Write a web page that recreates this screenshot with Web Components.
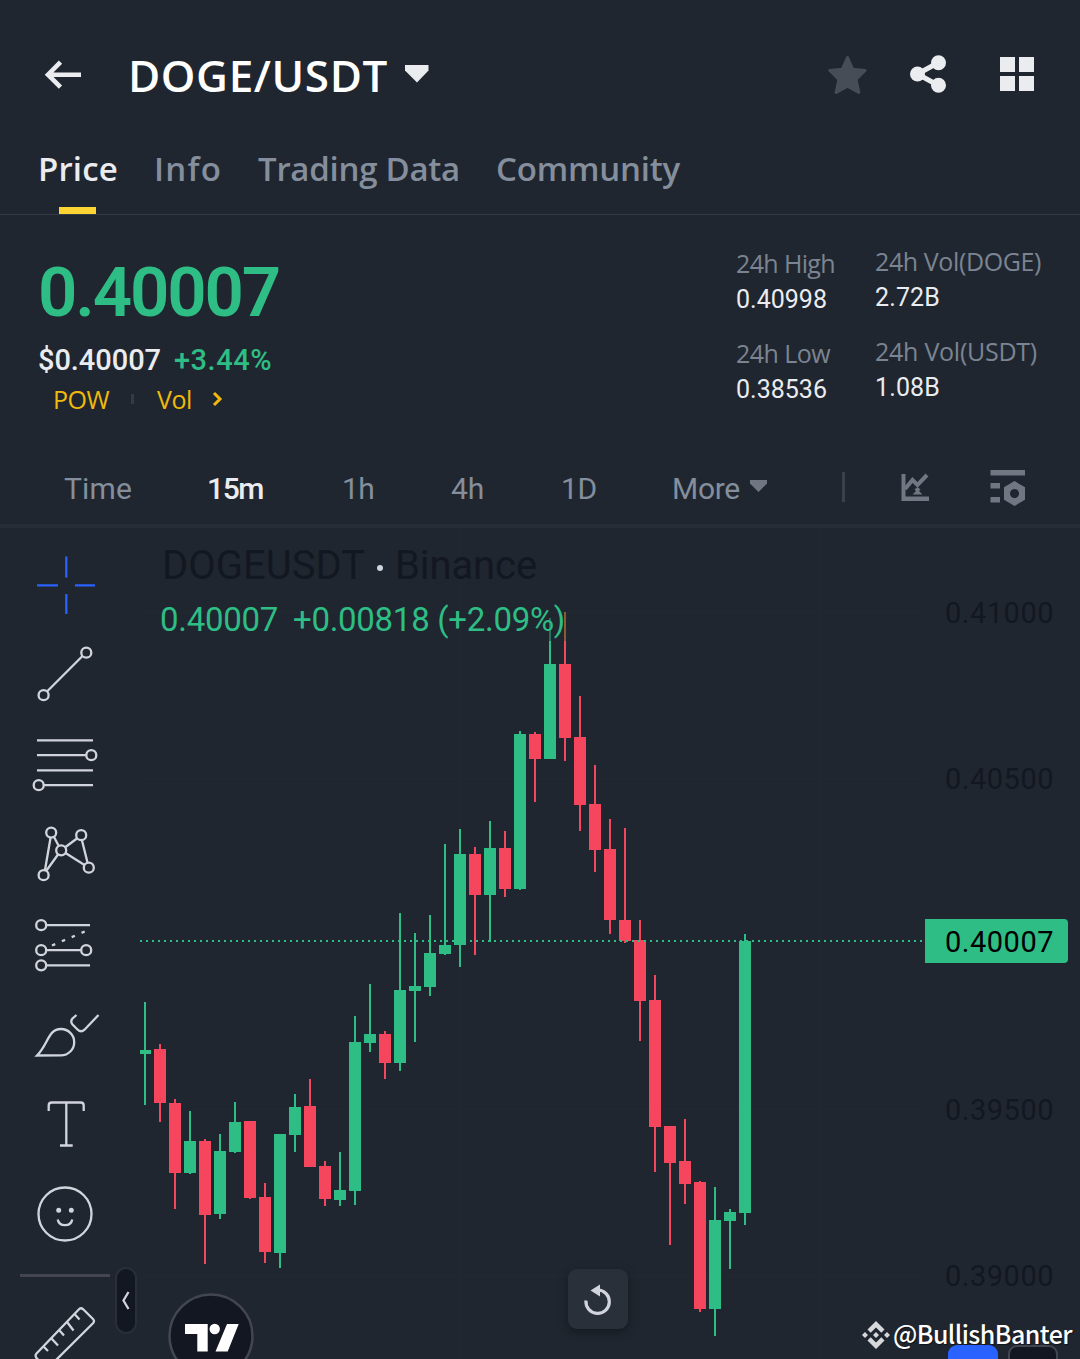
<!DOCTYPE html>
<html lang="en">
<head>
<meta charset="utf-8">
<title>DOGE/USDT</title>
<style>
  body {
    margin: 0;
    background: #20262f;
    color: #eaecef;
    font-family: Roboto, "Liberation Sans", sans-serif;
    overflow: hidden;
  }
</style>
</head>
<body>
<trade-page></trade-page>

<script>
const attach = (element, html) => {
  const template = document.createElement('template');
  template.innerHTML = html;
  element.attachShadow({ mode: 'open' });
  element.shadowRoot.appendChild(template.content.cloneNode(true));
};

// A single line of text, tracked so that it fills the width in its "w" attribute
class TrackedText extends HTMLElement {
  constructor() {
    super();
    attach(this, `
      <style>
        :host { display: block; flex: none; }
        span { display: inline-block; white-space: pre; vertical-align: top; }
      </style>
      <span><slot></slot></span>`);
  }

  connectedCallback() {
    const span = this.shadowRoot.querySelector('span');
    const nodes = this.shadowRoot.querySelector('slot').assignedNodes({ flatten: true });
    const count = nodes.map((node) => node.textContent).join('').length;
    const target = Number(this.getAttribute('w'));
    const natural = span.getBoundingClientRect().width;
    this.style.width = `${target}px`;
    span.style.letterSpacing = `${(target - natural) / count}px`;
  }
}

class PairHeader extends HTMLElement {
  constructor() {
    super();
    attach(this, `
      <style>
        :host {
          display: flex;
          align-items: center;
          height: 150px;
          box-sizing: border-box;
          padding: 0 44px 0 43px;
        }
        svg { display: block; flex: none; }
        tracked-text {
          font: 600 44px/60px "Open Sans", sans-serif;
          color: #fff;
          margin: 0 17px 0 46px;
        }
        .caret { margin-top: -2px; }
        .actions { display: flex; align-items: center; margin: -2px 2px 0 auto; }
        .share { margin: 0 53px 0 42px; }
      </style>
      <svg width="39" height="30" viewBox="43 60 39 30" fill="none" stroke="#eaecef" stroke-width="4.6">
        <path d="M81 74.700H48M60.500 62.200L48 74.700l12.500 12.500"/>
      </svg>
      <tracked-text w="260"><slot></slot></tracked-text>
      <svg class="caret" width="24" height="18" viewBox="0 0 24 18"><path d="M0 0h23.500v5.500L12 17.500 0 5.500z" fill="#eaecef"/></svg>
      <div class="actions">
        <svg width="39" height="40" viewBox="828 54 39 40" fill="#474d57" stroke="#474d57" stroke-width="3" stroke-linejoin="round">
          <path d="M847.500 57.500l5.200 11.800 12.300 1.100-9 9 2.800 13-11.300-6.300-11.300 6.300 2.700-13-9-9 12.400-1.100z"/>
        </svg>
        <svg class="share" width="38" height="40" viewBox="909 54 38 40" fill="#eaecef" stroke="#eaecef">
          <path d="M938.500 62.500L917.500 74l21 11.500" fill="none" stroke-width="5"/>
          <circle cx="917.500" cy="74" r="7.500" stroke="none"/>
          <circle cx="938.500" cy="62.800" r="7.500" stroke="none"/>
          <circle cx="938.500" cy="85.300" r="7.500" stroke="none"/>
        </svg>
        <svg width="34" height="36" viewBox="0 0 34 36" fill="#eaecef">
          <path d="M0 1h15v15H0zM19 1h15v15H19zM0 20h15v15H0zM19 20h15v15H19z"/>
        </svg>
      </div>`);
  }
}

class PageTabs extends HTMLElement {
  constructor() {
    super();
    attach(this, `
      <style>
        :host {
          display: flex;
          gap: 36px;
          height: 65px;
          box-sizing: border-box;
          padding-left: 38px;
          border-bottom: 1px solid #343a45;
          font: 600 33px/38px "Open Sans", sans-serif;
          color: #848e9c;
        }
        .tab { display: flex; flex-direction: column; align-items: center; justify-content: space-between; }
        .active { color: #eaecef; }
        .active::after { content: ""; width: 37px; height: 7px; background: #fcd535; margin-right: 1px; }
      </style>
      <div class="tab active"><tracked-text w="80">Price</tracked-text></div>
      <div class="tab"><tracked-text w="68">Info</tracked-text></div>
      <div class="tab"><tracked-text w="202">Trading Data</tracked-text></div>
      <div class="tab"><tracked-text w="184">Community</tracked-text></div>`);
  }
}

class StatCell extends HTMLElement {
  constructor() {
    super();
    attach(this, `
      <style>
        :host { display: block; height: 90px; }
        .label { font: 400 25px/34px "Open Sans", sans-serif; color: #7b8492; }
        .value { font: 400 25px/37px Roboto, sans-serif; color: #eaecef; margin-top: 1px; }
      </style>
      <div class="label"><slot name="label"></slot></div>
      <div class="value"><slot></slot></div>`);
  }
}

class PriceSummary extends HTMLElement {
  constructor() {
    super();
    attach(this, `
      <style>
        :host { display: flex; height: 240px; }
        .left { flex: 1; padding: 40px 0 0 38px; }
        .last { font: 600 69px/76px Roboto, sans-serif; color: #2ebd85; }
        .row { display: flex; align-items: center; }
        .fiat { height: 42px; margin-top: 8px; gap: 13px; font: 500 29px/42px Roboto, sans-serif; }
        .up { color: #2ebd85; }
        .tags { height: 36px; padding-left: 15px; font: 400 25px/34px "Open Sans", sans-serif; color: #f0b90b; }
        .bar { width: 3px; height: 10px; background: #333b47; margin: 0 23px 0 22px; }
        .tags svg { margin-left: 20px; }
        .stats { display: grid; grid-template-columns: 139px 205px; align-content: start; padding-top: 31px; }
        .second { margin-top: -2px; }
      </style>
      <div class="left">
        <tracked-text class="last" w="241">0.40007</tracked-text>
        <div class="row fiat">
          <tracked-text w="123">$0.40007</tracked-text>
          <tracked-text class="up" w="98">+3.44%</tracked-text>
        </div>
        <div class="row tags">
          <tracked-text w="56">POW</tracked-text>
          <span class="bar"></span>
          <tracked-text w="35">Vol</tracked-text>
          <svg width="12" height="16" viewBox="0 0 12 16" fill="none" stroke="#f0b90b" stroke-width="3"><path d="M2 2l6 6-6 6"/></svg>
        </div>
      </div>
      <div class="stats">
        <stat-cell><tracked-text slot="label" w="99">24h High</tracked-text><tracked-text w="91">0.40998</tracked-text></stat-cell>
        <stat-cell class="second"><tracked-text slot="label" w="166">24h Vol(DOGE)</tracked-text><tracked-text w="65">2.72B</tracked-text></stat-cell>
        <stat-cell><tracked-text slot="label" w="94">24h Low</tracked-text><tracked-text w="91">0.38536</tracked-text></stat-cell>
        <stat-cell class="second"><tracked-text slot="label" w="162">24h Vol(USDT)</tracked-text><tracked-text w="65">1.08B</tracked-text></stat-cell>
      </div>`);
  }
}

class IntervalBar extends HTMLElement {
  constructor() {
    super();
    attach(this, `
      <style>
        :host {
          display: flex;
          align-items: center;
          height: 73px;
          box-sizing: border-box;
          border-bottom: 4px solid #272d36;
          padding: 0 54px 2px 64px;
          font: 400 30px/40px Roboto, sans-serif;
          color: #848e9c;
        }
        .active { color: #eaecef; font-weight: 500; margin: 0 79px 0 75px; }
        .hour { margin-right: 77px; }
        .four { margin-right: 77px; }
        .day { margin-right: 75px; }
        svg { display: block; flex: none; fill: #707782; }
        .caret { margin: -5px 75px 0 10px; }
        .bar { width: 3px; height: 30px; background: #3a414c; margin: -4px 56px 0 0; }
        .chart { margin: -3px 61px 0 0; }
      </style>
      <tracked-text w="68">Time</tracked-text>
      <tracked-text class="active" w="56">15m</tracked-text>
      <tracked-text class="hour" w="32">1h</tracked-text>
      <tracked-text class="four" w="33">4h</tracked-text>
      <tracked-text class="day" w="36">1D</tracked-text>
      <tracked-text w="68">More</tracked-text>
      <svg class="caret" width="17" height="12" viewBox="0 0 17 12"><path d="M0 0h17v3.500L8.500 12 0 3.500z"/></svg>
      <span class="bar"></span>
      <svg class="chart" width="28" height="29" viewBox="901 472 28 29">
        <path d="M901.500 473h4v22.500h23.500v4.500h-27.500z"/>
        <path d="M905 488l7.500-9 5 5 9.500-10" fill="none" stroke="#707782" stroke-width="4"/>
        <path d="M917.500 486l3 2.500-1.500 1.500 3.500 3.500h-10l3.500-3.500-1.500-1.500z"/>
      </svg>
      <svg width="36" height="38" viewBox="990 470 36 38">
        <path d="M990.500 470h34.500v5.500h-34.500zM990.500 483h9.500v5.500h-9.500zM990.500 497h9.500v5.500h-9.500z"/>
        <path fill-rule="evenodd" d="M1014.500 481l10.500 6.200v12.600l-10.500 6.200-10.500-6.200v-12.600zM1014.500 489a4.500 4.500 0 1 0 .01 0z"/>
      </svg>`);
  }
}

// Drawing tools, one 90px cell each. Paths share one coordinate space and
// every cell shows its own 90px window of it.
const TOOLS = [
  '<path stroke="#2962ff" d="M66.300 556.500v21M66.300 594v20M37 585.300h21M75 585.300h20"/>',
  '<path d="M47 691.500L82.500 656"/><circle cx="86.300" cy="652.700" r="5"/><circle cx="43.600" cy="695.200" r="5"/>',
  '<path d="M37 740.300h56M37 755.200h49M37 770.300h56M44 785.200h49"/><circle cx="91.300" cy="755.200" r="5"/><circle cx="38.700" cy="785.200" r="5"/>',
  '<path d="M50.500 838l-5.500 32M54 837l4.500 8.500M58 854.500L46.500 870.500M65.500 847l11.500-8.500M82 840.500l5.500 22M65.500 853l19 12"/><circle cx="51.200" cy="832.600" r="5"/><circle cx="81.200" cy="835.200" r="5"/><circle cx="61.200" cy="850.300" r="5"/><circle cx="43.600" cy="875.200" r="5"/><circle cx="88.800" cy="867.700" r="5"/>',
  '<path d="M46.500 925.200H90M46.500 950.200H81M46.500 965.300H90"/><path stroke-dasharray="3.500 7.200" d="M52 945.500l35-15"/><circle cx="41.200" cy="925.200" r="5"/><circle cx="41.200" cy="950.200" r="5"/><circle cx="86.200" cy="950.200" r="5"/><circle cx="41.200" cy="965.300" r="5"/>',
  '<path d="M37 1055.500C48.500 1044 48 1029 61 1029a13.200 13.200 0 0 1 0 26.400zM76.500 1015l-4 3.500q-2.500 3 0 6l5 5q3.500 3.500 7 .2L98.500 1015"/>',
  '<path d="M48.700 1111v-5.500q0-3 3-3h29q3 0 3 3v5.500M66.300 1102.500v43M60 1145.500h12.700"/>',
  '<circle cx="65" cy="1214" r="26.500"/><path d="M57.700 1219.500c1.500 7.500 13.100 7.500 14.600 0"/><path stroke="none" fill="#d1d4dc" d="M56.200 1210.300a2.500 2.500 0 1 0 5 0a2.500 2.500 0 1 0-5 0M68.800 1210.300a2.500 2.500 0 1 0 5 0a2.500 2.500 0 1 0-5 0"/>',
];

class DrawingToolbar extends HTMLElement {
  constructor() {
    super();
    const cells = TOOLS.map((shape, i) => `<svg width="132" height="90" viewBox="0 ${540 + i * 90} 132 90">${shape}</svg>`).join('');
    attach(this, `
      <style>
        :host { display: block; width: 140px; padding-top: 12px; box-sizing: border-box; flex: none; }
        svg { display: block; fill: none; stroke: #d1d4dc; stroke-width: 2.300; }
        hr { width: 90px; height: 3px; border: 0; margin: 14px 0 0 20px; background: #434651; }
      </style>
      ${cells}
      <hr>
      <svg width="132" height="82" viewBox="0 1277 132 82">
        <path d="M44 1366l-7.500-8q-1.800-2.500 0-4.500L79 1309.300q2-2 4.200 0l9.800 9.700q2 2 0 4.200L50 1366"/>
        <path d="M74.500 1314l5 5.500M67 1322l6.500 8.500M59.500 1330.500l4.500 5M51.500 1338.500l6.500 7M43.500 1346.500l4.500 4.500"/>
      </svg>`);
  }
}

// x step is 15px; each row is [high, low, bodyTop, bodyBottom, rising]
const CANDLES = [
  [1002, 1105, 1050, 1054, 1], [1044, 1122, 1049, 1103, 0], [1099, 1209, 1103, 1173, 0],
  [1111, 1174, 1141, 1173, 1], [1139, 1264, 1141, 1215, 0], [1134, 1219, 1151, 1214, 1],
  [1102, 1153, 1122, 1152, 1], [1121, 1199, 1121, 1198, 0], [1183, 1263, 1197, 1252, 0],
  [1134, 1268, 1134, 1253, 1], [1094, 1152, 1107, 1135, 1], [1079, 1167, 1106, 1167, 0],
  [1161, 1206, 1166, 1199, 0], [1152, 1206, 1190, 1200, 1], [1016, 1205, 1042, 1191, 1],
  [984, 1052, 1034, 1043, 1], [1031, 1079, 1034, 1063, 0], [913, 1071, 990, 1063, 1],
  [933, 1042, 986, 991, 1], [915, 996, 953, 987, 1], [844, 955, 945, 954, 1],
  [829, 967, 854, 945, 1], [847, 955, 854, 895, 0], [821, 942, 848, 895, 1],
  [831, 897, 848, 889, 0], [731, 890, 734, 889, 1], [732, 802, 734, 759, 0],
  [618, 759, 664, 759, 1], [612, 761, 664, 738, 0], [696, 831, 737, 805, 0],
  [765, 872, 804, 850, 0], [819, 934, 849, 920, 0], [828, 943, 920, 941, 0],
  [920, 1041, 940, 1001, 0], [975, 1172, 1000, 1127, 0], [1126, 1245, 1126, 1163, 0],
  [1119, 1204, 1161, 1184, 0], [1181, 1312, 1182, 1309, 0], [1187, 1336, 1220, 1309, 1],
  [1209, 1269, 1212, 1221, 1], [934, 1225, 941, 1213, 1],
];

class CandleChart extends HTMLElement {
  constructor() {
    super();
    const candles = CANDLES.map(([high, low, top, bottom, rising], i) => {
      const x = 145 + i * 15;
      const left = Math.max(x - 6, 140);
      return `<path fill="${rising ? '#2ebd85' : '#f6465d'}" d="M${x - 1} ${high}h2V${low}h-2zM${left} ${top}H${x + 6}V${bottom}H${left}z"/>`;
    }).join('');
    const axis = [['0.41000', 613], ['0.40500', 779], ['0.39500', 1110], ['0.39000', 1276]]
      .map(([text, y]) => `<tracked-text class="price" w="109" style="top:${y - 548}px">${text}</tracked-text>`).join('');
    attach(this, `
      <style>
        :host { display: block; position: relative; flex: 1; height: 831px; overflow: hidden; }
        svg { display: block; }
        .legend { position: absolute; left: 20px; top: 13px; }
        .name { display: flex; font-size: 40px; line-height: 50px; color: #131722; height: 50px; padding-left: 2px; }
        .dot { width: 6px; height: 6px; border-radius: 50%; background: #d1d4dc; margin: 24px 12px 0 12px; }
        .change { display: flex; gap: 15px; font-size: 33px; line-height: 40px; margin-top: 9px; color: #2ebd85; }
        .price { position: absolute; left: 805px; font-size: 29px; line-height: 40px; color: #131722; }
        .last {
          position: absolute;
          left: 785px;
          top: 391px;
          width: 143px;
          height: 44px;
          box-sizing: border-box;
          padding-left: 20px;
          border-radius: 0 4px 4px 0;
          background: #2ebd85;
          color: #000;
          font-size: 29px;
          line-height: 46px;
        }
      </style>
      <svg width="940" height="831" viewBox="140 528 940 831" shape-rendering="crispEdges">
        <path d="M140 612.500h785M140 778.500h785M140 1109.500h785M140 1275.500h785M460.500 528v831M820.500 528v831" stroke="#222831"/>
        ${candles}
        <path d="M549 618h2v23h-2z" fill="#267057"/>
        <path d="M564 612h2v29h-2z" fill="#8b5a33"/>
        <path d="M140 941h785" stroke="#2ebd85" stroke-width="2" stroke-dasharray="2 4"/>
      </svg>
      <div class="legend">
        <div class="name">
          <tracked-text w="203">DOGEUSDT</tracked-text><span class="dot"></span><tracked-text w="142">Binance</tracked-text>
        </div>
        <div class="change"><tracked-text w="118">0.40007</tracked-text><tracked-text w="272">+0.00818 (+2.09%)</tracked-text></div>
      </div>
      ${axis}
      <div class="last"><tracked-text w="109">0.40007</tracked-text></div>`);
  }
}

// Floating controls that lie over the chart
class ChartOverlays extends HTMLElement {
  constructor() {
    super();
    attach(this, `
      <style>
        :host { display: block; }
        .handle, .logo, .reset, .btn, .mark { position: absolute; box-sizing: border-box; }
        svg { display: block; overflow: visible; }
        .handle { left: 115px; top: 739px; width: 22px; height: 67px; border: 2px solid #2a2e39; border-radius: 11px; background: #131722; }
        .logo { left: 168px; top: 765px; }
        .reset { left: 568px; top: 741px; width: 60px; height: 60px; border-radius: 9px; background: #2a303a; box-shadow: 0 3px 8px rgba(10, 13, 20, .5); }
        .btn { top: 817px; width: 50px; height: 40px; border-radius: 9px; }
        .blue { left: 948px; background: #2962ff; }
        .dark { left: 1008px; background: #131722; border: 2px solid #434651; }
        .mark {
          left: 862px;
          top: 787px;
          display: flex;
          align-items: center;
          gap: 3px;
          font: 500 25px/36px "Noto Sans CJK SC", sans-serif;
          color: #fff;
          text-shadow: 1px 1px 1px rgba(0, 0, 0, .5);
        }
        .mark svg { margin-top: 4px; }
      </style>
      <div class="handle">
        <svg width="18" height="63" viewBox="117 1269 18 63"><path d="M128.500 1292l-5 8.500 5 8.500" fill="none" stroke="#d1d4dc" stroke-width="2.300"/></svg>
      </div>
      <svg class="logo" width="86" height="66" viewBox="168 1293 86 66">
        <circle cx="211" cy="1336" r="41.500" fill="#131722" stroke="#434651" stroke-width="2.500"/>
        <path fill="#fff" d="M185 1324h22.700v27.500h-10.400V1334H185zM227 1324h11.700l-11 27.500h-12.200z"/>
        <circle cx="214.700" cy="1329" r="5.200" fill="#fff"/>
      </svg>
      <div class="reset">
        <svg width="60" height="60" viewBox="568 1269 60 60">
          <path d="M586 1300.500a11.700 11.700 0 1 0 11.700-10.500" fill="none" stroke="#d1d4dc" stroke-width="3.200"/>
          <path d="M590.500 1290.500l9.500-6v12z" fill="#d1d4dc"/>
        </svg>
      </div>
      <span class="btn blue"></span>
      <span class="btn dark"></span>
      <div class="mark">
        <svg width="28" height="28" viewBox="0 0 28 28" fill="#d6d8dc">
          <path d="M14 0l8.500 8.500-3.200 3.200L14 6.400l-5.300 5.300-3.200-3.200zM14 28l8.500-8.500-3.200-3.200L14 21.600l-5.300-5.300-3.200 3.200zM14 11l3 3-3 3-3-3zM3 11l3 3-3 3-3-3zM25 11l3 3-3 3-3-3z"/>
        </svg>
        <tracked-text w="179">@BullishBanter</tracked-text>
      </div>`);
  }
}

class TradePage extends HTMLElement {
  constructor() {
    super();
    attach(this, `
      <style>
        :host { display: flex; flex-direction: column; width: 1080px; height: 1359px; overflow: hidden; }
        .chart-area { display: flex; position: relative; height: 831px; }
      </style>
      <pair-header>DOGE/USDT</pair-header>
      <page-tabs></page-tabs>
      <price-summary></price-summary>
      <interval-bar></interval-bar>
      <div class="chart-area">
        <drawing-toolbar></drawing-toolbar>
        <candle-chart></candle-chart>
        <chart-overlays></chart-overlays>
      </div>`);
  }
}

customElements.define('pair-header', PairHeader);
customElements.define('page-tabs', PageTabs);
customElements.define('stat-cell', StatCell);
customElements.define('price-summary', PriceSummary);
customElements.define('interval-bar', IntervalBar);
customElements.define('drawing-toolbar', DrawingToolbar);
customElements.define('candle-chart', CandleChart);
customElements.define('chart-overlays', ChartOverlays);
customElements.define('trade-page', TradePage);
// Last, so that every text is laid out with its final font when it is measured
customElements.define('tracked-text', TrackedText);
</script>
</body>
</html>
